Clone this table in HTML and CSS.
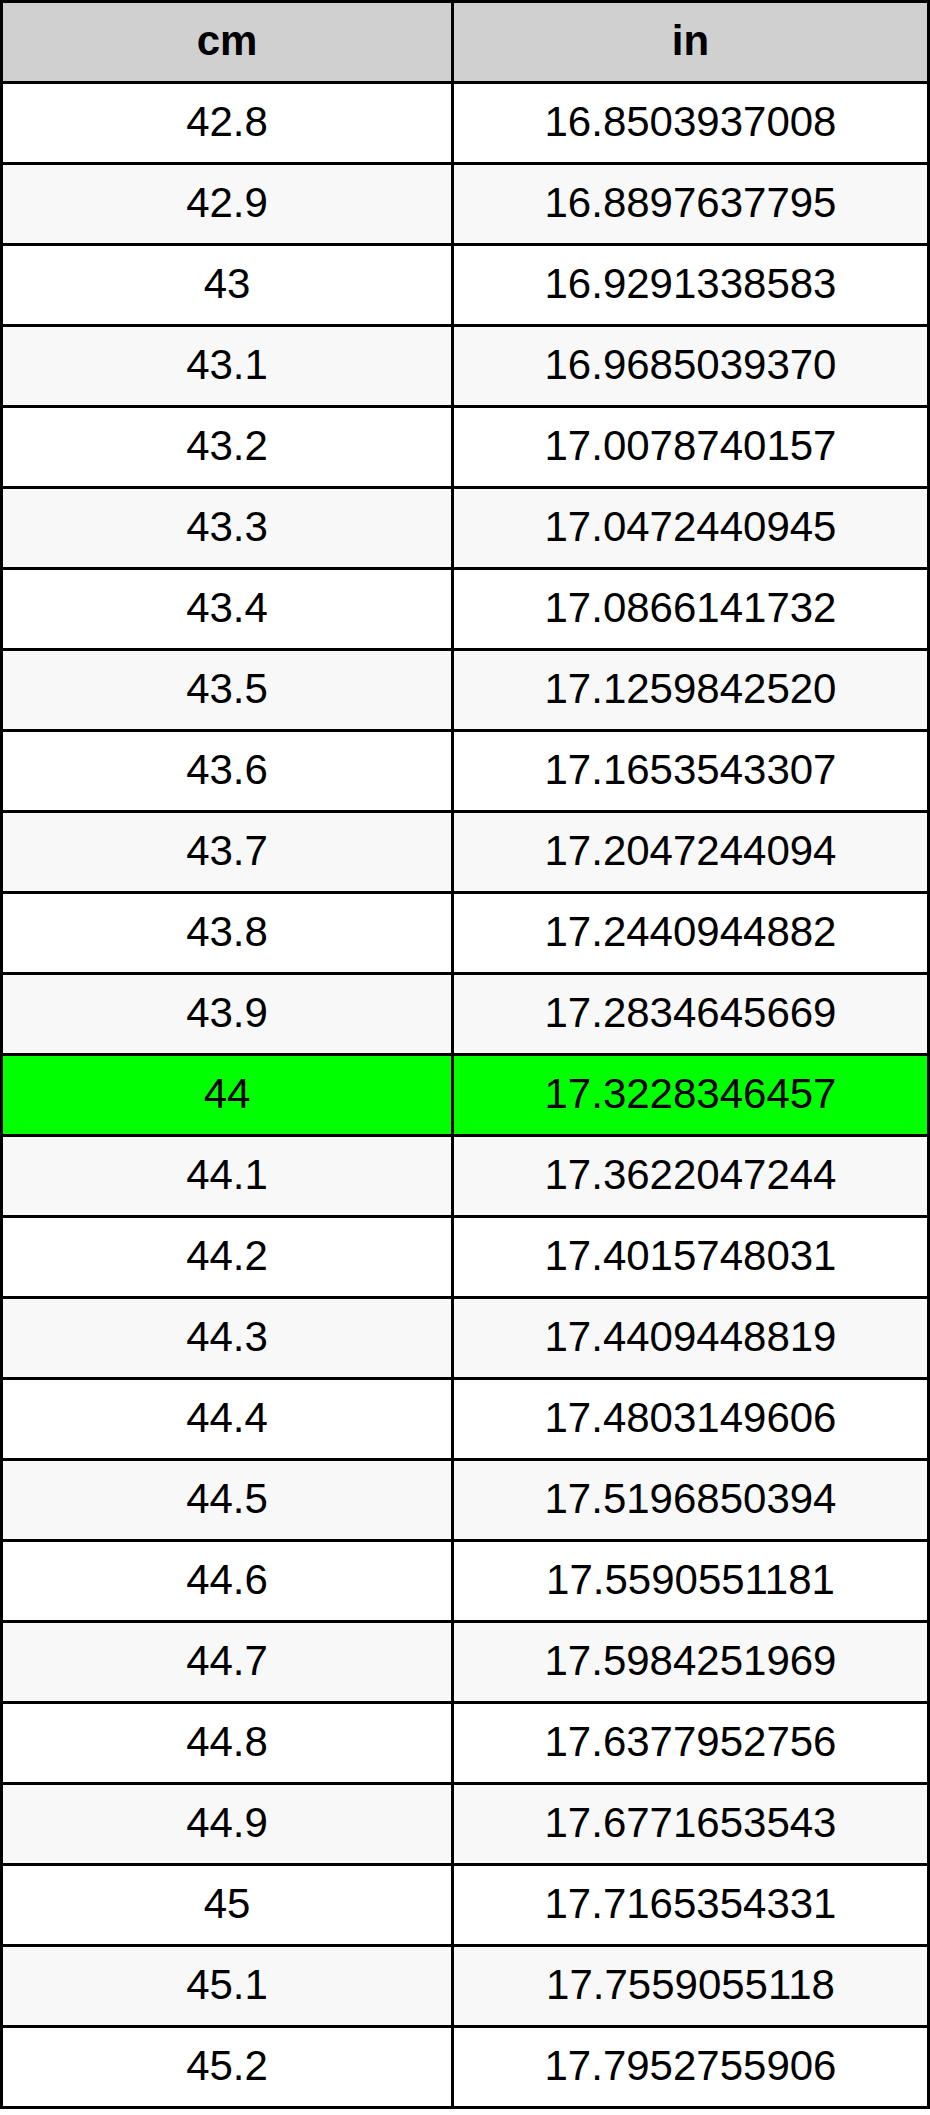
FILE: index.html
```html
<!DOCTYPE html>
<html>
<head>
<meta charset="utf-8">
<title>cm to in</title>
<link rel="stylesheet" href="styles.css">
</head>
<body>
<table class="conv">
<thead>
<tr><th class="c1">cm</th><th class="c2">in</th></tr>
</thead>
<tbody>
<tr><td>42.8</td><td>16.8503937008</td></tr>
<tr class="alt"><td>42.9</td><td>16.8897637795</td></tr>
<tr><td>43</td><td>16.9291338583</td></tr>
<tr class="alt"><td>43.1</td><td>16.9685039370</td></tr>
<tr><td>43.2</td><td>17.0078740157</td></tr>
<tr class="alt"><td>43.3</td><td>17.0472440945</td></tr>
<tr><td>43.4</td><td>17.0866141732</td></tr>
<tr class="alt"><td>43.5</td><td>17.1259842520</td></tr>
<tr><td>43.6</td><td>17.1653543307</td></tr>
<tr class="alt"><td>43.7</td><td>17.2047244094</td></tr>
<tr><td>43.8</td><td>17.2440944882</td></tr>
<tr class="alt"><td>43.9</td><td>17.2834645669</td></tr>
<tr class="hl"><td>44</td><td>17.3228346457</td></tr>
<tr class="alt"><td>44.1</td><td>17.3622047244</td></tr>
<tr><td>44.2</td><td>17.4015748031</td></tr>
<tr class="alt"><td>44.3</td><td>17.4409448819</td></tr>
<tr><td>44.4</td><td>17.4803149606</td></tr>
<tr class="alt"><td>44.5</td><td>17.5196850394</td></tr>
<tr><td>44.6</td><td>17.5590551181</td></tr>
<tr class="alt"><td>44.7</td><td>17.5984251969</td></tr>
<tr><td>44.8</td><td>17.6377952756</td></tr>
<tr class="alt"><td>44.9</td><td>17.6771653543</td></tr>
<tr><td>45</td><td>17.7165354331</td></tr>
<tr class="alt"><td>45.1</td><td>17.7559055118</td></tr>
<tr><td>45.2</td><td>17.7952755906</td></tr>
</tbody>
</table>
</body>
</html>
```
FILE: styles.css
```css
html, body {
  margin: 0;
  padding: 0;
  background: #ffffff;
}
.conv {
  width: 930px;
  table-layout: fixed;
  border-collapse: separate;
  border-spacing: 0;
  border-top: 3px solid #000;
  border-left: 3px solid #000;
  font-family: "Liberation Sans", Arial, sans-serif;
  font-size: 42px;
  color: #000;
}
.conv tr {
  height: 81px;
}
.conv th, .conv td {
  padding: 0 0 3px 0;
  text-align: center;
  vertical-align: middle;
  border-right: 3px solid #000;
  border-bottom: 3px solid #000;
  background: #ffffff;
  line-height: 1;
}
.conv th {
  background: #d0d0d0;
  font-weight: bold;
}
.conv .c1 {
  width: 451px;
  box-sizing: border-box;
}
.conv .c2 {
  width: 476px;
  box-sizing: border-box;
}
.conv tr.alt td {
  background: #f8f8f8;
}
.conv tr.hl td {
  background: #00ff00;
}
```
